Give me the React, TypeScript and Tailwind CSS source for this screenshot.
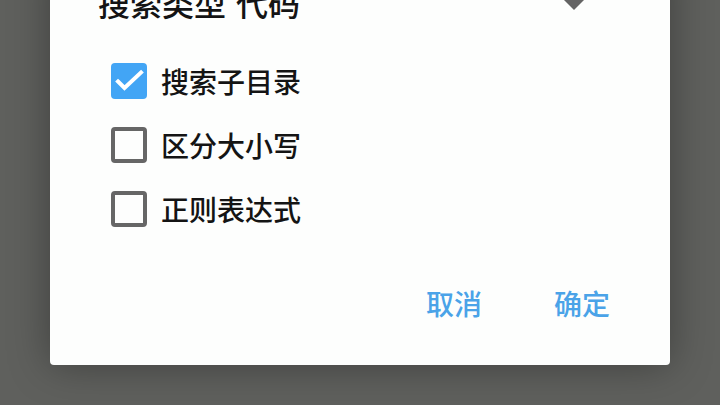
import React from "react";

const font = { fontFamily: '"Noto Sans CJK SC", "Noto Sans", sans-serif' };

function Box({ checked }: { checked: boolean }) {
  if (checked) {
    return (
      <div className="w-[36px] h-[36px] rounded-[4px] bg-[#42a5f5] flex items-center justify-center shrink-0">
        <svg width="36" height="36" viewBox="0 0 36 36">
          <path d="M7 18.5 L13.5 25 L30 9.5" fill="none" stroke="#ffffff" strokeWidth="4" strokeLinecap="square" />
        </svg>
      </div>
    );
  }
  return <div className="w-[36px] h-[36px] rounded-[4px] border-[4px] border-[#666666] shrink-0" />;
}

function Row({ label, checked }: { label: string; checked: boolean }) {
  return (
    <div className="h-[64px] flex items-center pl-[61px]">
      <Box checked={checked} />
      <span className="ml-[14px] text-[28px] leading-[28px] font-medium text-[#141414]">{label}</span>
    </div>
  );
}

export default function App() {
  return (
    <div className="w-[720px] h-[405px] overflow-hidden bg-[#5f605d] flex justify-center" style={font}>
      <div className="w-[620px] h-[405px] mt-[-40px] bg-[#fdfefd] rounded-[4px] shadow-[0_0_40px_rgba(0,0,0,0.35)] flex flex-col">
        <div className="h-[58px] flex items-end pl-[48px] pr-[86px]">
          <div className="flex items-center w-full h-[32px]">
            <span className="text-[32px] leading-[32px] font-medium text-[#141414]">搜索类型</span>
            <span className="ml-[10px] text-[32px] leading-[32px] font-medium text-[#141414]">代码</span>
            <div className="ml-auto self-start mt-[14px]">
              <svg width="20" height="10" viewBox="0 0 20 10">
                <path d="M0 0 L20 0 L10 10 Z" fill="#646464" />
              </svg>
            </div>
          </div>
        </div>
        <div className="h-[31px]" />
        <Row label="搜索子目录" checked={true} />
        <Row label="区分大小写" checked={false} />
        <Row label="正则表达式" checked={false} />
        <div className="flex-1 flex items-center justify-end pr-[60px]">
          <span className="text-[28px] leading-[28px] font-medium text-[#4aa3e8]">取消</span>
          <span className="ml-[72px] text-[28px] leading-[28px] font-medium text-[#4aa3e8]">确定</span>
        </div>
      </div>
    </div>
  );
}
